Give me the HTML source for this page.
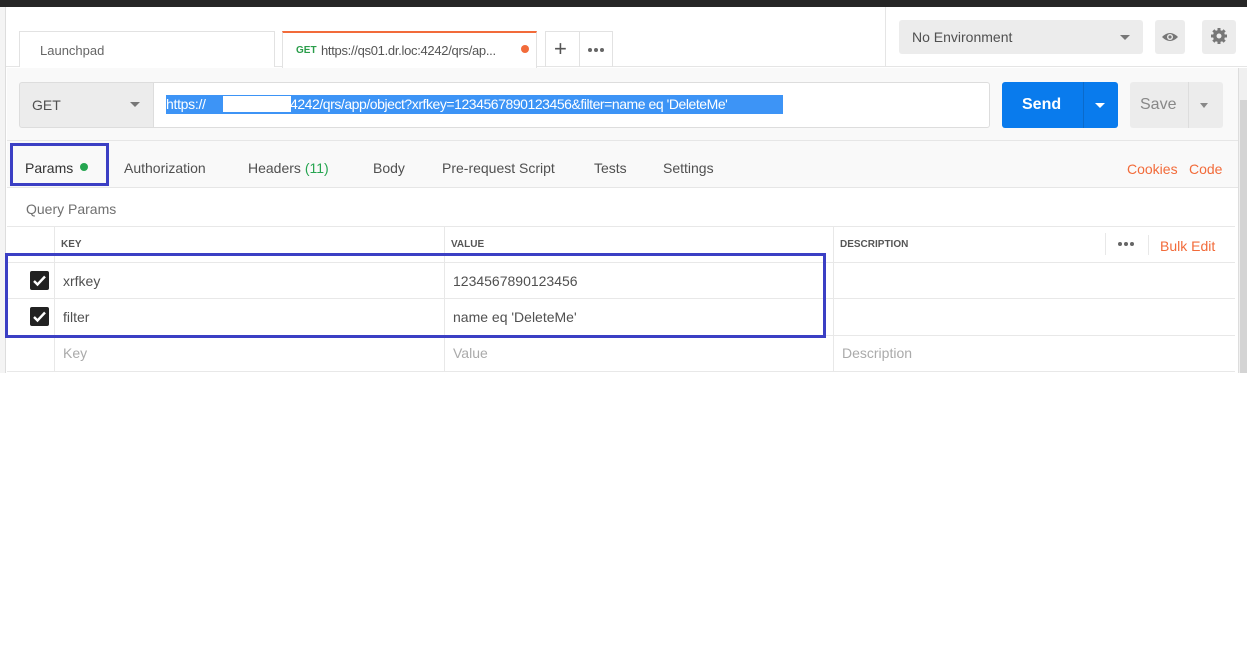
<!DOCTYPE html>
<html><head><meta charset="utf-8"><style>
*{box-sizing:border-box;margin:0;padding:0}
body{width:1247px;height:648px;background:#fff;font-family:"Liberation Sans",sans-serif;position:relative;overflow:hidden;color:#505050}
.a{position:absolute}
.t{font-size:14px;white-space:nowrap}
.d{position:absolute;width:4px;height:4px;border-radius:50%;background:#666}
</style></head><body>
<div class="a" style="left:0;top:0;width:1247px;height:7px;background:#262626"></div>
<div class="a" style="left:0;top:7px;width:6px;height:366px;background:#f4f4f4;border-right:1px solid #ddd"></div>
<div class="a" style="left:6px;top:7px;width:1241px;height:60px;background:#fff;border-bottom:1px solid #e5e5e5"></div>
<div class="a" style="left:19px;top:31px;width:256px;height:36px;border:1px solid #e2e2e2;border-bottom:none;background:#fff"></div>
<div class="a t" style="left:40px;top:43px;font-size:13px;color:#666">Launchpad</div>
<div class="a" style="left:282px;top:31px;width:255px;height:37px;border:1px solid #e2e2e2;border-top:2px solid #f26b3a;border-bottom:none;background:#fff"></div>
<div class="a t" style="left:296px;top:45px;font-size:10px;font-weight:bold;color:#2a9d4a">GET</div>
<div class="a t" style="left:321px;top:43px;font-size:13px;color:#555;letter-spacing:-0.3px">https://qs01.dr.loc:4242/qrs/ap...</div>
<div class="a" style="left:521px;top:45px;width:8px;height:8px;border-radius:50%;background:#f26b3a"></div>
<div class="a" style="left:545px;top:31px;width:68px;height:36px;border:1px solid #e2e2e2;border-bottom:none"></div>
<div class="a" style="left:579px;top:31px;width:1px;height:36px;background:#e2e2e2"></div>
<div class="a t" style="left:554px;top:36px;font-size:22px;color:#555">+</div>
<div class="d" style="left:588px;top:48px"></div><div class="d" style="left:594px;top:48px"></div><div class="d" style="left:600px;top:48px"></div>
<div class="a" style="left:885px;top:7px;width:1px;height:60px;background:#e5e5e5"></div>
<div class="a" style="left:899px;top:20px;width:244px;height:34px;background:#ececec;border-radius:3px"></div>
<div class="a t" style="left:912px;top:29px;color:#505050">No Environment</div>
<div class="a" style="left:1120px;top:35px;border-left:5px solid transparent;border-right:5px solid transparent;border-top:5px solid #777"></div>
<div class="a" style="left:1155px;top:20px;width:30px;height:34px;background:#ececec;border-radius:3px"></div>
<svg class="a" style="left:1161px;top:29px" width="18" height="16" viewBox="0 0 18 16"><path d="M1 8Q9 0 17 8Q9 16 1 8Z" fill="#777"/><circle cx="9" cy="8" r="3" fill="#ececec"/><circle cx="9" cy="8" r="1.6" fill="#777"/></svg>
<div class="a" style="left:1202px;top:20px;width:34px;height:34px;background:#ececec;border-radius:3px"></div>
<svg class="a" style="left:1210px;top:27px" width="18" height="18" viewBox="0 0 18 18"><g fill="#777"><circle cx="9" cy="9" r="6"/><rect x="7.5" y="1" width="3" height="16"/><rect x="1" y="7.5" width="16" height="3"/><rect x="7.5" y="1" width="3" height="16" transform="rotate(45 9 9)"/><rect x="7.5" y="1" width="3" height="16" transform="rotate(-45 9 9)"/></g><circle cx="9" cy="9" r="2.5" fill="#ececec"/></svg>
<div class="a" style="left:7px;top:68px;width:1231px;height:120px;background:#f9f9f9"></div>
<div class="a" style="left:1238px;top:68px;width:9px;height:305px;background:#f0f0f0;border-left:1px solid #ddd"></div>
<div class="a" style="left:1240px;top:100px;width:7px;height:273px;background:#d4d4d4"></div>
<div class="a" style="left:19px;top:82px;width:135px;height:46px;background:#ececec;border:1px solid #ddd;border-radius:3px 0 0 3px"></div>
<div class="a t" style="left:32px;top:97px;color:#505050">GET</div>
<div class="a" style="left:130px;top:102px;border-left:5px solid transparent;border-right:5px solid transparent;border-top:5px solid #777"></div>
<div class="a" style="left:153px;top:82px;width:837px;height:46px;background:#fff;border:1px solid #ddd;border-radius:0 3px 3px 0"></div>
<div class="a" style="left:166px;top:95px;width:617px;height:19px;background:#3d94f6"></div>
<div class="a" style="left:223px;top:96px;width:68px;height:16px;background:#fff"></div>
<div class="a t" style="left:166px;top:96px;color:#fff;letter-spacing:-0.3px">https://</div>
<div class="a t" style="left:290px;top:96px;color:#fff;letter-spacing:-0.45px">4242/qrs/app/object?xrfkey=1234567890123456&amp;filter=name eq 'DeleteMe'</div>
<div class="a" style="left:1002px;top:82px;width:116px;height:46px;background:#097bed;border-radius:3px"></div>
<div class="a" style="left:1083px;top:82px;width:1px;height:46px;background:#0a6acb"></div>
<div class="a t" style="left:1022px;top:96px;font-size:16px;font-weight:bold;color:#fff">Send</div>
<div class="a" style="left:1095px;top:103px;border-left:5px solid transparent;border-right:5px solid transparent;border-top:5px solid #fff"></div>
<div class="a" style="left:1130px;top:82px;width:93px;height:46px;background:#ececec;border-radius:3px"></div>
<div class="a" style="left:1188px;top:82px;width:1px;height:46px;background:#ddd"></div>
<div class="a t" style="left:1140px;top:96px;font-size:16px;color:#888">Save</div>
<div class="a" style="left:1200px;top:103px;border-left:4px solid transparent;border-right:4px solid transparent;border-top:5px solid #888"></div>
<div class="a" style="left:7px;top:140px;width:1231px;height:1px;background:#e6e6e6"></div>
<div class="a" style="left:7px;top:187px;width:1231px;height:1px;background:#e6e6e6"></div>
<div class="a t" style="left:25px;top:160px;color:#333">Params</div>
<div class="a" style="left:80px;top:163px;width:8px;height:8px;border-radius:50%;background:#26a550"></div>
<div class="a t" style="left:124px;top:160px">Authorization</div>
<div class="a t" style="left:248px;top:160px">Headers <span style="color:#26a550">(11)</span></div>
<div class="a t" style="left:373px;top:160px">Body</div>
<div class="a t" style="left:442px;top:160px">Pre-request Script</div>
<div class="a t" style="left:594px;top:160px">Tests</div>
<div class="a t" style="left:663px;top:160px">Settings</div>
<div class="a t" style="left:1127px;top:161px;color:#f26b3a">Cookies</div>
<div class="a t" style="left:1189px;top:161px;color:#f26b3a">Code</div>
<div class="a" style="left:10px;top:143px;width:99px;height:43px;border:3px solid #3b3fc4"></div>
<div class="a t" style="left:26px;top:201px;color:#707070">Query Params</div>
<div class="a" style="left:7px;top:226px;width:1228px;height:146px;border-top:1px solid #e8e8e8;border-bottom:1px solid #e8e8e8"></div>
<div class="a" style="left:54px;top:226px;width:1px;height:146px;background:#e8e8e8"></div>
<div class="a" style="left:444px;top:226px;width:1px;height:146px;background:#e8e8e8"></div>
<div class="a" style="left:833px;top:226px;width:1px;height:146px;background:#e8e8e8"></div>
<div class="a" style="left:7px;top:262px;width:1228px;height:1px;background:#e8e8e8"></div>
<div class="a" style="left:7px;top:298px;width:1228px;height:1px;background:#e8e8e8"></div>
<div class="a" style="left:7px;top:335px;width:1228px;height:1px;background:#e8e8e8"></div>
<div class="a" style="left:1105px;top:233px;width:1px;height:22px;background:#e8e8e8"></div>
<div class="a" style="left:1148px;top:235px;width:1px;height:20px;background:#e8e8e8"></div>
<div class="a t" style="left:61px;top:239px;font-size:10px;font-weight:bold;color:#555">KEY</div>
<div class="a t" style="left:451px;top:239px;font-size:10px;font-weight:bold;color:#555">VALUE</div>
<div class="a t" style="left:840px;top:239px;font-size:10px;font-weight:bold;color:#555">DESCRIPTION</div>
<div class="d" style="left:1118px;top:242px"></div><div class="d" style="left:1124px;top:242px"></div><div class="d" style="left:1130px;top:242px"></div>
<div class="a t" style="left:1160px;top:238px;color:#f26b3a">Bulk Edit</div>
<svg class="a" style="left:30px;top:271px" width="19" height="19" viewBox="0 0 19 19"><rect width="19" height="19" rx="2" fill="#222"/><path d="M4 10l3.5 3.5L15 5.5" stroke="#fff" stroke-width="2.4" fill="none"/></svg>
<svg class="a" style="left:30px;top:307px" width="19" height="19" viewBox="0 0 19 19"><rect width="19" height="19" rx="2" fill="#222"/><path d="M4 10l3.5 3.5L15 5.5" stroke="#fff" stroke-width="2.4" fill="none"/></svg>
<div class="a t" style="left:63px;top:273px">xrfkey</div>
<div class="a t" style="left:453px;top:273px">1234567890123456</div>
<div class="a t" style="left:63px;top:309px">filter</div>
<div class="a t" style="left:453px;top:309px">name eq 'DeleteMe'</div>
<div class="a t" style="left:63px;top:345px;color:#aaa">Key</div>
<div class="a t" style="left:453px;top:345px;color:#aaa">Value</div>
<div class="a t" style="left:842px;top:345px;color:#aaa">Description</div>
<div class="a" style="left:5px;top:253px;width:821px;height:85px;border:3px solid #3b3fc4"></div>
</body></html>
